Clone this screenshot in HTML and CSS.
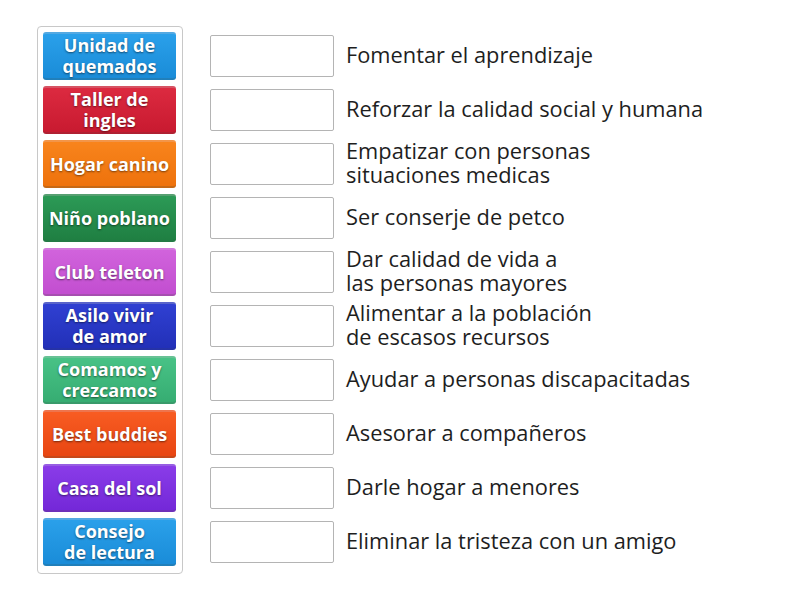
FILE: index.html
```html
<!DOCTYPE html>
<html lang="es">
<head>
  <meta charset="UTF-8" />
  <title>Relacionar</title>
  <link rel="stylesheet" href="styles.css">
</head>
<body>
  <div class="board">
    <div class="tiles">
      <div class="tile blue">Unidad de<br>quemados</div>
      <div class="tile red">Taller de<br>ingles</div>
      <div class="tile orange">Hogar canino</div>
      <div class="tile green">Niño poblano</div>
      <div class="tile pink">Club teleton</div>
      <div class="tile navy">Asilo vivir<br>de amor</div>
      <div class="tile mint">Comamos y<br>crezcamos</div>
      <div class="tile flame">Best buddies</div>
      <div class="tile violet">Casa del sol</div>
      <div class="tile blue">Consejo<br>de lectura</div>
    </div>

    <ul class="targets">
      <li><span class="slot"></span><span class="label">Fomentar el aprendizaje</span></li>
      <li><span class="slot"></span><span class="label">Reforzar la calidad social y humana</span></li>
      <li><span class="slot"></span><span class="label">Empatizar con personas<br>situaciones medicas</span></li>
      <li><span class="slot"></span><span class="label">Ser conserje de petco</span></li>
      <li><span class="slot"></span><span class="label">Dar calidad de vida a<br>las personas mayores</span></li>
      <li><span class="slot"></span><span class="label">Alimentar a la población<br>de escasos recursos</span></li>
      <li><span class="slot"></span><span class="label">Ayudar a personas discapacitadas</span></li>
      <li><span class="slot"></span><span class="label">Asesorar a compañeros</span></li>
      <li><span class="slot"></span><span class="label">Darle hogar a menores</span></li>
      <li><span class="slot"></span><span class="label">Eliminar la tristeza con un amigo</span></li>
    </ul>
  </div>
</body>
</html>
```

FILE: styles.css
```css
* { margin: 0; padding: 0; box-sizing: border-box; }

body {
  background: #fff;
  font-family: "Open Sans", "Noto Sans", sans-serif;
  padding: 26px 37px;
}

.board { display: flex; align-items: flex-start; }

.tiles {
  width: 146px;
  border: 1px solid #c8c8c8;
  border-radius: 4px;
  padding: 5px 6px 7px 5px;
  display: flex; flex-direction: column; gap: 6px;
}

.tile {
  height: 48px;
  border-radius: 3px;
  color: #fff;
  font-weight: bold; font-size: 18px; line-height: 21px;
  text-align: center;
  display: flex; align-items: center; justify-content: center;
  text-shadow: 0 1px 2px rgba(0, 0, 0, 0.5);
  border-top: 2px solid rgba(255, 255, 255, 0.25);
  border-bottom: 2px solid rgba(0, 0, 0, 0.2);
}

.blue   { background: linear-gradient(#2aa0ea, #1a8cd8); }
.red    { background: linear-gradient(#dc2a40, #c81a30); }
.orange { background: linear-gradient(#f8841c, #ee720c); }
.green  { background: linear-gradient(#2c9a56, #1f7f42); }
.pink   { background: linear-gradient(#d163dc, #c24ed0); }
.navy   { background: linear-gradient(#3040d2, #2230b8); }
.mint   { background: linear-gradient(#48c286, #36ad72); }
.flame  { background: linear-gradient(#f85c22, #e84612); }
.violet { background: linear-gradient(#8a3ce8, #7428d8); }

.targets {
  list-style: none;
  margin-left: 27px; margin-top: 6px;
  display: flex; flex-direction: column; gap: 6px;
}

.targets li {
  height: 48px;
  display: flex; align-items: center; gap: 12px;
}

.slot {
  width: 124px; height: 42px; flex: none;
  border: 1px solid #b4b4b4; border-radius: 2px;
  background: #fff;
}

.label {
  font-size: 21.8px; line-height: 24px;
  color: #1e1e1e;
  margin-bottom: 2px;
}
```
